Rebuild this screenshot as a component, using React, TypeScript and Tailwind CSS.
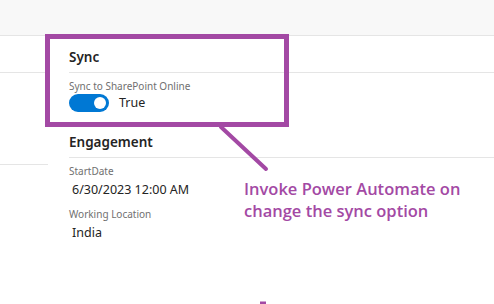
import React from "react";

const purple = "#a349a4";

function Field({ label, value, className }: { label: string; value: string; className?: string }) {
  return (
    <div className={className}>
      <div className="text-[10px] leading-[14px] text-[#707070]">{label}</div>
      <div className="mt-[3px] pl-[3px] text-[12.5px] leading-[18px] text-[#242424]">{value}</div>
    </div>
  );
}

export default function App() {
  return (
    <div
      className="relative h-[304px] w-[494px] overflow-hidden bg-white"
      style={{ fontFamily: '"Noto Sans", "Open Sans", sans-serif' }}
    >
      {/* command bar strip */}
      <div className="h-[36px] border-b border-[#e5e5e5] bg-[#f8f8f8]" />

      <div className="flex">
        {/* clipped neighbour panel */}
        <div className="w-[48px] shrink-0">
          <div className="h-[37px] border-b border-[#e5e5e5]" />
          <div className="h-[92px] border-b border-[#e5e5e5]" />
        </div>

        <div className="flex-1 pl-[21px]">
          {/* Sync section */}
          <div className="flex h-[37px] items-end border-b border-[#e5e5e5] pb-[5px]">
            <span className="text-[13.5px] font-semibold leading-[20px] text-[#242424]">Sync</span>
          </div>
          <div className="mt-[6px] text-[10px] leading-[14px] text-[#707070]">Sync to SharePoint Online</div>
          <div className="mt-[1px] flex items-center gap-[10px]">
            <div className="flex h-[18px] w-[40px] items-center justify-end rounded-full bg-[#0078d4] pr-[3px]">
              <div className="h-[12px] w-[12px] rounded-full bg-white" />
            </div>
            <span className="text-[12.5px] leading-[18px] text-[#242424]">True</span>
          </div>

          {/* Engagement section */}
          <div className="flex h-[46px] items-end border-b border-[#e5e5e5] pb-[5px]">
            <span className="text-[13.5px] font-semibold leading-[20px] text-[#242424]">Engagement</span>
          </div>
          <Field className="mt-[6px]" label="StartDate" value="6/30/2023 12:00 AM" />
          <Field className="mt-[8px]" label="Working Location" value="India" />
        </div>
      </div>

      {/* annotation */}
      <div className="absolute left-[45px] top-[34px] h-[93px] w-[244px] border-[5px] border-[#a349a4]" />
      <svg className="pointer-events-none absolute left-0 top-0" width="494" height="304">
        <line x1="221" y1="127" x2="266" y2="169" stroke={purple} strokeWidth="4" strokeLinecap="round" />
        <line x1="260" y1="303" x2="266" y2="303" stroke={purple} strokeWidth="3" />
      </svg>
      <div
        className="absolute left-[244px] top-[178px] text-[16.5px] font-semibold leading-[22px] text-[#a349a4]"
        style={{ fontFamily: '"Open Sans", "Noto Sans", sans-serif' }}
      >
        Invoke Power Automate on
        <br />
        change the sync option
      </div>
    </div>
  );
}
